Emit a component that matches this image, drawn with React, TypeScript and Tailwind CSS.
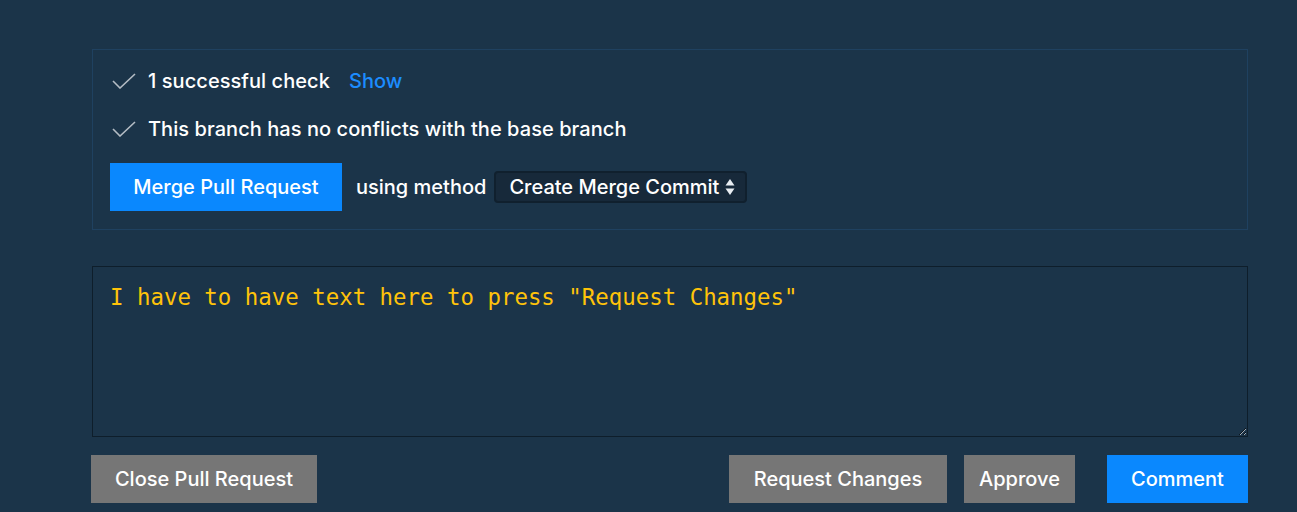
import React from "react";

function CheckMark() {
  return (
    <svg width="24" height="16" viewBox="0 0 24 16" className="shrink-0">
      <polyline points="1,8 8,15 23,1" fill="none" stroke="#b4bcc4" strokeWidth="1.6" />
    </svg>
  );
}

function UpDown() {
  return (
    <svg width="10" height="18" viewBox="0 0 10 18" className="ml-[6px]">
      <polygon points="5,1 9.5,7.5 0.5,7.5" fill="#e8edf2" />
      <polygon points="5,17 9.5,10.5 0.5,10.5" fill="#e8edf2" />
    </svg>
  );
}

export default function App() {
  return (
    <div className="min-h-[512px] w-full bg-[#1b3449] font-['Inter',_'Liberation_Sans',_sans-serif] font-medium text-white">
      <div className="ml-[92px] w-[1156px] pt-[49px]">
        <section className="h-[181px] border border-[#1f4160] px-[17px] pt-[15px]">
          <div className="flex h-8 items-center gap-[12px] text-[20px] tracking-[0.06px]">
            <span className="ml-[2px]">
              <CheckMark />
            </span>
            <span>1 successful check</span>
            <span className="ml-[7px] text-[#1c8cff]">Show</span>
          </div>
          <div className="mt-4 flex h-8 items-center gap-[12px] text-[20px] tracking-[0.06px]">
            <span className="ml-[2px]">
              <CheckMark />
            </span>
            <span>This branch has no conflicts with the base branch</span>
          </div>
          <div className="mt-[18px] flex items-center text-[20px]">
            <button className="flex h-[48px] w-[232px] items-center justify-center bg-[#0a88fe] text-white">
              Merge Pull Request
            </button>
            <span className="ml-[14px]">using method</span>
            <div className="ml-[8px] flex h-[32px] w-[253px] items-center rounded-[4px] border-2 border-[#10202e] bg-[#17293a] pl-[13px]">
              <span>Create Merge Commit</span>
              <UpDown />
            </div>
          </div>
        </section>

        <textarea
          className="mt-[36px] block h-[171px] w-[1156px] resize-y border border-[#0e1e2b] bg-[#1b3449] px-[17px] pt-[14px] font-['DejaVu_Sans_Mono',_monospace] text-[22.4px] text-[#ffc30a] outline-none"
          defaultValue={'I have to have text here to press "Request Changes"'}
        />

        <div className="mt-[18px] flex items-center text-[20px]">
          <button className="-ml-px flex h-[48px] w-[226px] items-center justify-center bg-[#767676] text-white">
            Close Pull Request
          </button>
          <div className="ml-auto flex items-center">
            <button className="flex h-[48px] w-[218px] items-center justify-center bg-[#767676] text-white">
              Request Changes
            </button>
            <button className="ml-[17px] flex h-[48px] w-[111px] items-center justify-center bg-[#767676] text-white">
              Approve
            </button>
            <button className="ml-[32px] flex h-[48px] w-[141px] items-center justify-center bg-[#0a88fe] text-white">
              Comment
            </button>
          </div>
        </div>
      </div>
    </div>
  );
}
